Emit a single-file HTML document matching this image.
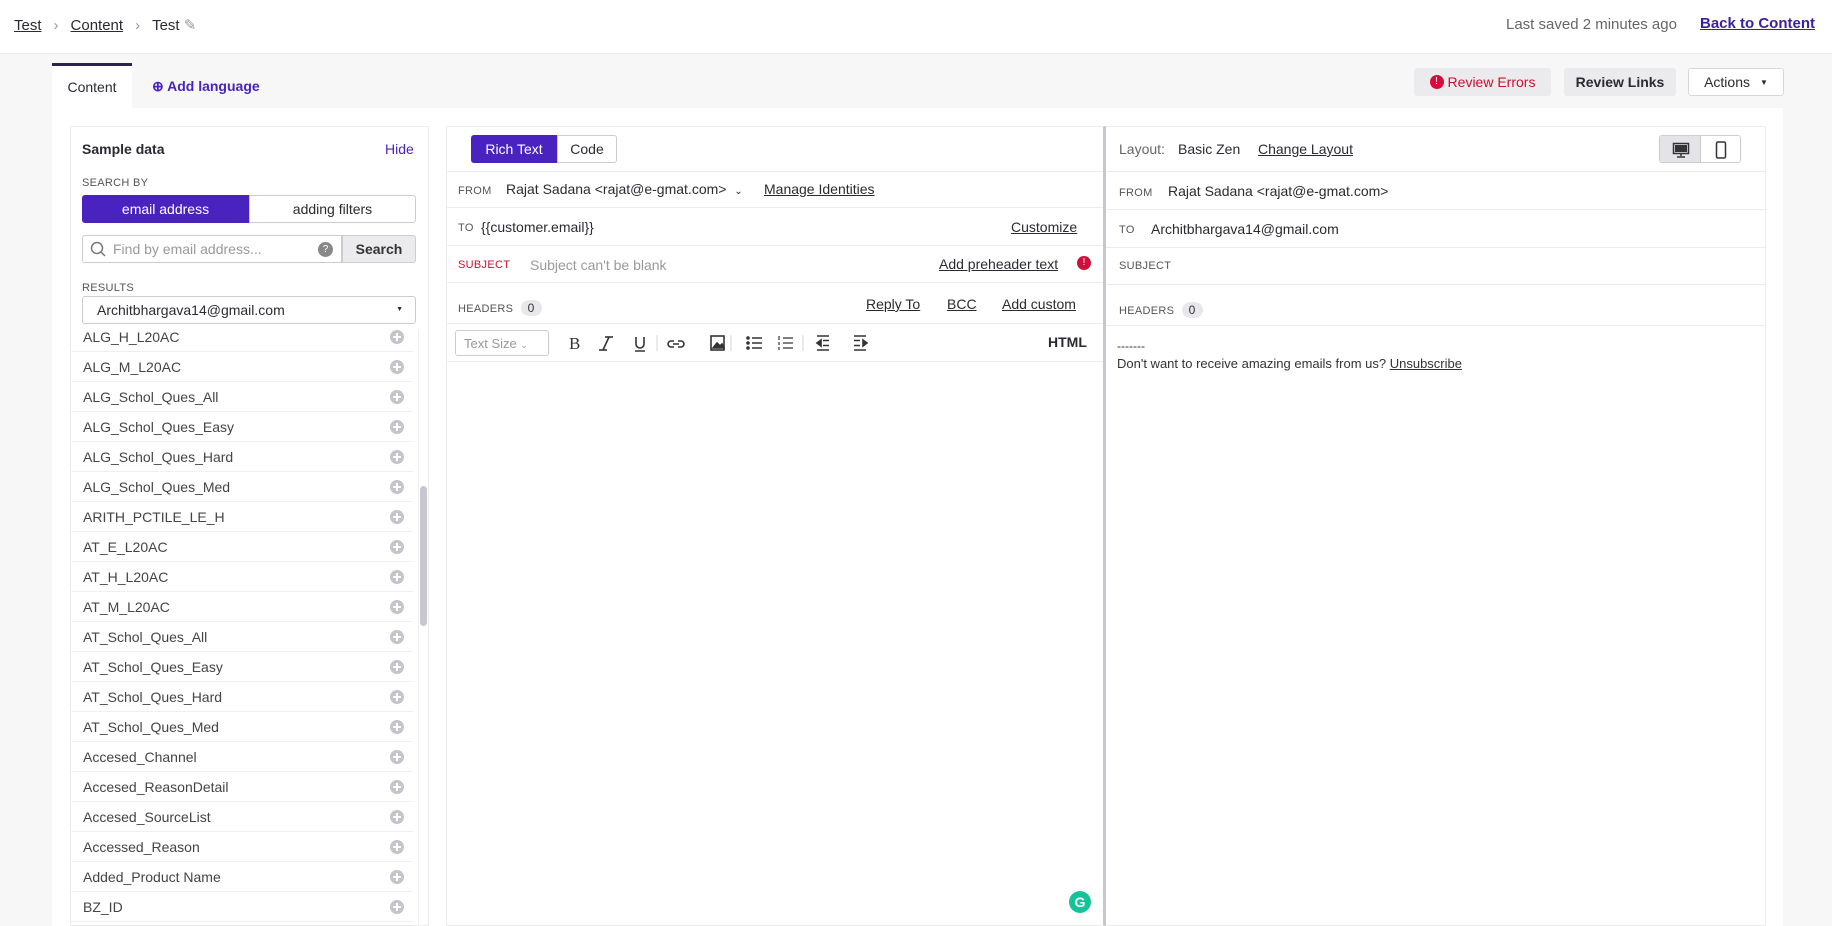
<!DOCTYPE html>
<html><head><meta charset="utf-8"><style>
*{box-sizing:border-box;margin:0;padding:0}
body{width:1832px;height:926px;overflow:hidden;background:#f7f7f8;font-family:"Liberation Sans",sans-serif;color:#2a2a33;font-size:15px;position:relative}
.a{position:absolute}
.u{text-decoration:underline}
.lbl{font-size:11px;color:#555;letter-spacing:.3px}
.p{color:#4a22c0}
.row{position:absolute;left:0;right:0;border-bottom:1px solid #ececef}
.btn{position:absolute;border-radius:3px;font-size:15px;display:flex;align-items:center;justify-content:center}
.li{position:absolute;left:0;width:342px;height:30px;border-bottom:1px solid #f0f0f2;font-size:14px;color:#444;padding-left:12px;line-height:30px}
.pl{position:absolute;right:9px;top:8px;width:14px;height:14px;border-radius:50%;background:#c4c4cc}
.pl:before{content:"";position:absolute;left:3px;top:6px;width:8px;height:2px;background:#fff}
.pl:after{content:"";position:absolute;left:6px;top:3px;width:2px;height:8px;background:#fff}
.pill{display:inline-block;background:#e8e8ec;border-radius:9px;padding:1px 7px;font-size:12px;margin-left:4px}
</style></head><body>
<div class="a" style="left:0;top:0;width:1832px;height:54px;background:#fff;border-bottom:1px solid #ececef"></div>
<div class="a" style="left:14px;top:16px;font-size:15px"><span class="u">Test</span><span style="color:#999;margin:0 12px">›</span><span class="u">Content</span><span style="color:#999;margin:0 12px">›</span>Test <span style="color:#999">✎</span></div>
<div class="a" style="left:1506px;top:16px;color:#666;font-size:15px">Last saved 2 minutes ago</div>
<div class="a p u" style="left:1700px;top:15px;font-size:15px;font-weight:bold;color:#3b1fa0">Back to Content</div>

<div class="a" style="left:52px;top:63px;width:80px;height:46px;background:#fff;border-top:3px solid #2b2250;text-align:center;line-height:42px;font-size:14px">Content</div>
<div class="a p" style="left:152px;top:78px;font-size:14px;font-weight:bold">⊕ Add language</div>
<div class="btn" style="left:1414px;top:68px;width:137px;height:28px;background:#ebebee;color:#c8102e;font-size:14px"><span style="display:inline-block;width:14px;height:14px;border-radius:50%;background:#d0103a;color:#fff;font-size:10px;text-align:center;line-height:14px;margin-right:4px">!</span>Review Errors</div>
<div class="btn" style="left:1564px;top:68px;width:112px;height:28px;background:#ebebee;font-size:14px;font-weight:bold">Review Links</div>
<div class="btn" style="left:1688px;top:68px;width:96px;height:28px;background:#fff;border:1px solid #d8d8dc;font-size:14px">Actions <span style="font-size:8px;margin-left:10px">▼</span></div>

<div class="a" style="left:52px;top:108px;width:1731px;height:818px;background:#fff"></div>

<!-- left panel -->
<div class="a" style="left:70px;top:126px;width:359px;height:800px;border:1px solid #ececef;background:#fff;overflow:hidden">
 <div class="a" style="left:11px;top:14px;font-size:14px;font-weight:bold">Sample data</div>
 <div class="a p" style="left:314px;top:14px;font-size:14px">Hide</div>
 <div class="a lbl" style="left:11px;top:50px">SEARCH BY</div>
 <div class="a" style="left:11px;top:68px;width:167px;height:28px;background:#4a22c0;color:#fff;font-size:14px;text-align:center;line-height:28px;border-radius:3px 0 0 3px">email address</div>
 <div class="a" style="left:178px;top:68px;width:167px;height:28px;border:1px solid #ccc;font-size:14px;text-align:center;line-height:26px;border-radius:0 3px 3px 0">adding filters</div>
 <div class="a" style="left:11px;top:108px;width:260px;height:28px;border:1px solid #ccc;border-radius:3px 0 0 3px"></div>
 <svg class="a" style="left:19px;top:114px" width="16" height="16"><circle cx="7" cy="7" r="5.5" fill="none" stroke="#777" stroke-width="1.5"/><line x1="11" y1="11" x2="15" y2="15" stroke="#777" stroke-width="1.5"/></svg>
 <div class="a" style="left:42px;top:114px;font-size:14px;color:#999">Find by email address...</div>
 <div class="a" style="left:247px;top:115px;width:15px;height:15px;border-radius:50%;background:#888;color:#fff;font-size:10px;text-align:center;line-height:15px">?</div>
 <div class="a" style="left:271px;top:108px;width:74px;height:28px;background:#ebebee;border:1px solid #ccc;border-radius:0 3px 3px 0;font-size:14px;text-align:center;line-height:26px;font-weight:bold;color:#333">Search</div>
 <div class="a lbl" style="left:11px;top:155px">RESULTS</div>
 <div class="a" style="left:11px;top:169px;width:334px;height:28px;border:1px solid #ccc;border-radius:3px;font-size:14px;padding-left:14px;line-height:26px">Architbhargava14@gmail.com<span style="position:absolute;right:12px;font-size:7px">▼</span></div>
 <div class="a" style="left:0;top:202px;width:359px;height:600px;overflow:hidden">
  <div class="a" style="left:0;top:-7px;width:359px">
   <div class="li" style="top:0">ALG_H_L20AC<i class="pl"></i></div>
   <div class="li" style="top:30px">ALG_M_L20AC<i class="pl"></i></div>
   <div class="li" style="top:60px">ALG_Schol_Ques_All<i class="pl"></i></div>
   <div class="li" style="top:90px">ALG_Schol_Ques_Easy<i class="pl"></i></div>
   <div class="li" style="top:120px">ALG_Schol_Ques_Hard<i class="pl"></i></div>
   <div class="li" style="top:150px">ALG_Schol_Ques_Med<i class="pl"></i></div>
   <div class="li" style="top:180px">ARITH_PCTILE_LE_H<i class="pl"></i></div>
   <div class="li" style="top:210px">AT_E_L20AC<i class="pl"></i></div>
   <div class="li" style="top:240px">AT_H_L20AC<i class="pl"></i></div>
   <div class="li" style="top:270px">AT_M_L20AC<i class="pl"></i></div>
   <div class="li" style="top:300px">AT_Schol_Ques_All<i class="pl"></i></div>
   <div class="li" style="top:330px">AT_Schol_Ques_Easy<i class="pl"></i></div>
   <div class="li" style="top:360px">AT_Schol_Ques_Hard<i class="pl"></i></div>
   <div class="li" style="top:390px">AT_Schol_Ques_Med<i class="pl"></i></div>
   <div class="li" style="top:420px">Accesed_Channel<i class="pl"></i></div>
   <div class="li" style="top:450px">Accesed_ReasonDetail<i class="pl"></i></div>
   <div class="li" style="top:480px">Accesed_SourceList<i class="pl"></i></div>
   <div class="li" style="top:510px">Accessed_Reason<i class="pl"></i></div>
   <div class="li" style="top:540px">Added_Product Name<i class="pl"></i></div>
   <div class="li" style="top:570px">BZ_ID<i class="pl"></i></div>
  </div>
  <div class="a" style="left:347px;top:0;width:11px;height:600px;border-left:1px solid #eee"></div>
  <div class="a" style="left:349px;top:157px;width:7px;height:140px;background:#c8c8cc;border-radius:4px"></div>
 </div>
</div>

<!-- editor -->
<div class="a" style="left:446px;top:126px;width:660px;height:800px;border:1px solid #ececef;border-right:3px solid #c6c6cc;background:#fff">
 <div class="row" style="top:0;height:45px"></div>
 <div class="a" style="left:24px;top:8px;width:86px;height:28px;background:#4a22c0;color:#fff;font-size:14px;text-align:center;line-height:28px;border-radius:3px 0 0 3px">Rich Text</div>
 <div class="a" style="left:110px;top:8px;width:60px;height:28px;border:1px solid #ccc;font-size:14px;text-align:center;line-height:26px;border-radius:0 3px 3px 0">Code</div>
 <div class="row" style="top:45px;height:36px"></div>
 <div class="a lbl" style="left:11px;top:58px">FROM</div>
 <div class="a" style="left:59px;top:54px;font-size:14px">Rajat Sadana &lt;rajat@e-gmat.com&gt; <span style="font-size:10px;margin-left:4px">⌄</span></div>
 <div class="a u" style="left:317px;top:54px;font-size:14px">Manage Identities</div>
 <div class="row" style="top:81px;height:38px"></div>
 <div class="a lbl" style="left:11px;top:95px">TO</div>
 <div class="a" style="left:34px;top:92px;font-size:14px">{{customer.email}}</div>
 <div class="a u" style="left:564px;top:92px;font-size:14px">Customize</div>
 <div class="row" style="top:119px;height:37px"></div>
 <div class="a lbl" style="left:11px;top:132px;color:#c8102e">SUBJECT</div>
 <div class="a" style="left:83px;top:130px;font-size:14px;color:#999">Subject can't be blank</div>
 <div class="a u" style="left:492px;top:129px;font-size:14px">Add preheader text</div>
 <div class="a" style="left:630px;top:129px;width:14px;height:14px;border-radius:50%;background:#d0103a;color:#fff;font-size:10px;text-align:center;line-height:14px">!</div>
 <div class="row" style="top:156px;height:41px"></div>
 <div class="a lbl" style="left:11px;top:173px">HEADERS <span class="pill" style="color:#333">0</span></div>
 <div class="a u" style="left:419px;top:169px;font-size:14px">Reply To</div>
 <div class="a u" style="left:500px;top:169px;font-size:14px">BCC</div>
 <div class="a u" style="left:555px;top:169px;font-size:14px">Add custom</div>
 <div class="row" style="top:197px;height:38px"></div>
 <div class="a" style="left:8px;top:203px;width:94px;height:26px;border:1px solid #ccc;border-radius:3px;font-size:13px;color:#999;padding:5px 8px">Text Size <span style="font-size:9px">⌄</span></div>
 <svg class="a" style="left:112px;top:206px" width="440" height="20" fill="none" stroke="#333" stroke-width="1.6">
  <text x="10" y="16" font-family="Liberation Serif" font-size="17" fill="#333" stroke="none">B</text>
  <line x1="50" y1="4" x2="44" y2="17"/><line x1="46" y1="4" x2="54" y2="4"/><line x1="40" y1="17" x2="48" y2="17"/>
  <path d="M77 4v7a4 4 0 0 0 8 0V4M76 18h10"/>
  <line x1="98" y1="2" x2="98" y2="18" stroke="#e4e4e4"/>
  <path d="M115 8h-3a3 3 0 0 0 0 6h3M119 8h3a3 3 0 0 1 0 6h-3M114 11h6"/>
  <rect x="152" y="3" width="13" height="14"/><path d="M154 15l4-5 3 3 2-2 2 4z" fill="#333"/>
  <line x1="172" y1="2" x2="172" y2="18" stroke="#e4e4e4"/>
  <path d="M193 5h10M193 10h10M193 15h10"/><circle cx="189" cy="5" r="1" fill="#333"/><circle cx="189" cy="10" r="1" fill="#333"/><circle cx="189" cy="15" r="1" fill="#333"/>
  <path d="M224 5h10M224 10h10M224 15h10M220 3v4M220 9v3M220 14v3" stroke-width="1.2"/>
  <line x1="244" y1="2" x2="244" y2="18" stroke="#e4e4e4"/>
  <path d="M258 3h12M264 7.5h6M264 12.5h6M258 17h12"/><path d="M262 7l-4 3 4 3z" fill="#333"/>
  <path d="M295 3h12M295 7.5h6M295 12.5h6M295 17h12"/><path d="M304 7l4 3-4 3z" fill="#333"/>
 </svg>
 <div class="a" style="left:601px;top:207px;font-size:14px;font-weight:bold">HTML</div>
 <div class="a" style="left:622px;top:764px;width:22px;height:22px;border-radius:50%;background:#15c39a;color:#fff;font-size:14px;text-align:center;line-height:22px;font-weight:bold">G</div>
</div>

<!-- preview -->
<div class="a" style="left:1106px;top:126px;width:660px;height:800px;border:1px solid #ececef;border-left:none;background:#fff">
 <div class="row" style="top:0;height:45px"></div>
 <div class="a" style="left:13px;top:14px;font-size:14px;color:#666">Layout:</div>
 <div class="a" style="left:72px;top:14px;font-size:14px">Basic Zen</div>
 <div class="a u" style="left:152px;top:14px;font-size:14px">Change Layout</div>
 <div class="a" style="left:553px;top:8px;width:82px;height:28px;border:1px solid #ccc;border-radius:3px;overflow:hidden">
  <div class="a" style="left:0;top:0;width:41px;height:28px;background:#e4e4e8;border-right:1px solid #ccc"></div>
  <svg class="a" style="left:12px;top:6px" width="18" height="16"><rect x="1.5" y="1.5" width="15" height="10" fill="none" stroke="#333" stroke-width="1.5"/><path d="M9 12v2M5 15h8" stroke="#333" stroke-width="1.5"/><rect x="3" y="3" width="12" height="7" fill="#333"/></svg>
  <svg class="a" style="left:55px;top:5px" width="12" height="18"><rect x="1.5" y="1" width="9" height="16" rx="1.5" fill="none" stroke="#333" stroke-width="1.5"/></svg>
 </div>
 <div class="row" style="top:45px;height:38px"></div>
 <div class="a lbl" style="left:13px;top:60px">FROM</div>
 <div class="a" style="left:62px;top:56px;font-size:14px">Rajat Sadana &lt;rajat@e-gmat.com&gt;</div>
 <div class="row" style="top:83px;height:38px"></div>
 <div class="a lbl" style="left:13px;top:97px">TO</div>
 <div class="a" style="left:45px;top:94px;font-size:14px">Architbhargava14@gmail.com</div>
 <div class="row" style="top:121px;height:37px"></div>
 <div class="a lbl" style="left:13px;top:133px">SUBJECT</div>
 <div class="row" style="top:158px;height:41px"></div>
 <div class="a lbl" style="left:13px;top:175px">HEADERS <span class="pill" style="color:#333">0</span></div>
 <div class="a" style="left:11px;top:212px;font-size:12px;color:#333">-------</div>
 <div class="a" style="left:11px;top:229px;font-size:13px;color:#333">Don't want to receive amazing emails from us? <span class="u">Unsubscribe</span></div>
</div>
</body></html>
